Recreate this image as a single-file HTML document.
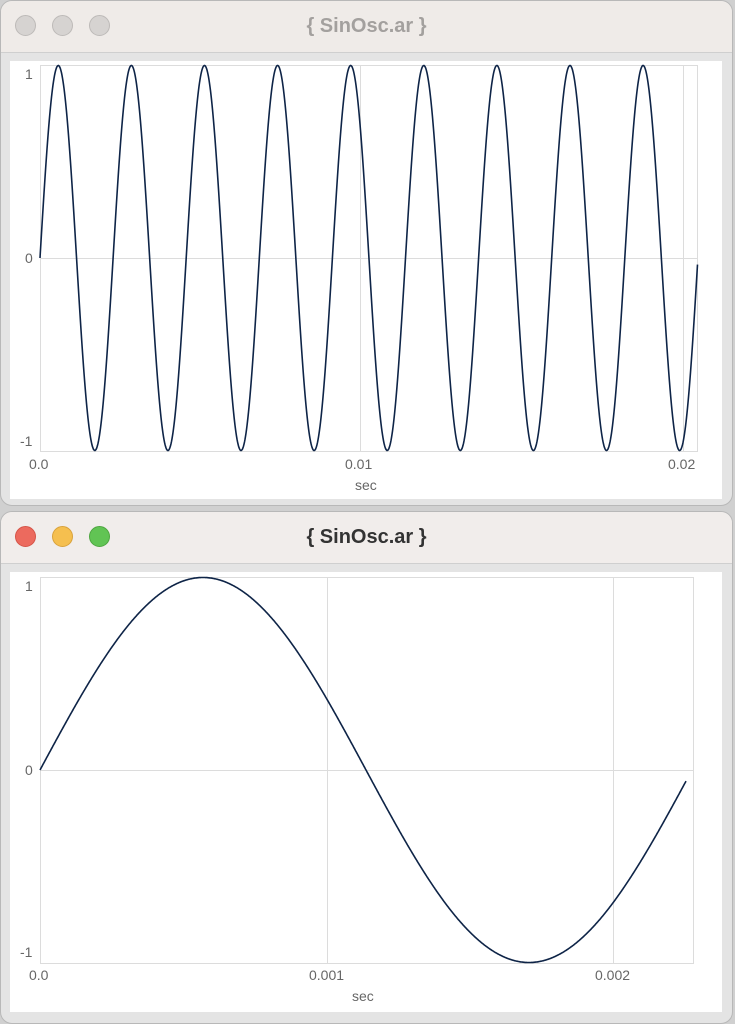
<!DOCTYPE html>
<html><head><meta charset="utf-8"><style>
body{margin:0;width:735px;height:1024px;background:#d0d0d0;position:relative;overflow:hidden;font-family:"Liberation Sans",sans-serif}
.win{position:absolute;left:0;width:733px;background:#e4e4e4;border-radius:12px;border:1px solid #b8b8b8;box-sizing:border-box;overflow:hidden}
.tb{position:absolute;left:0;top:0;right:0;height:51px;background:#efebe8;border-bottom:1px solid #cfcfcf}
.tt{position:absolute;left:0;right:0;top:14px;text-align:center;font-weight:bold;font-size:20px}
.dot{position:absolute;top:14px;width:21px;height:21px;border-radius:50%;box-sizing:border-box}
.panel{position:absolute;left:9px;right:10px;background:#fff}
svg{position:absolute;left:0;top:0}
</style></head><body>
<div class="win" style="top:0;height:506px">
 <div class="tb"><div class="dot" style="left:14px;background:#d6d3d1;border:1px solid #bdbab8"></div><div class="dot" style="left:51px;background:#d6d3d1;border:1px solid #bdbab8"></div><div class="dot" style="left:88px;background:#d6d3d1;border:1px solid #bdbab8"></div><div class="tt" style="color:#a3a09e">{ SinOsc.ar }</div></div>
 <div class="panel" style="top:60px;height:438px"></div>
</div>
<div class="win" style="top:511px;height:513px">
 <div class="tb" style="background:#f1edeb"><div class="dot" style="left:14px;background:#ec6a5e;border:1px solid #d55448"></div><div class="dot" style="left:51px;background:#f5bf4f;border:1px solid #d9a23b"></div><div class="dot" style="left:88px;background:#61c454;border:1px solid #4ea640"></div><div class="tt" style="color:#333">{ SinOsc.ar }</div></div>
 <div class="panel" style="top:60px;height:440px"></div>
</div>
<svg width="735" height="1024" font-family="Liberation Sans, sans-serif" font-size="14" fill="#666">
 <g stroke="#dcdcdc" fill="none" stroke-width="1">
  <rect x="40.5" y="65.5" width="657" height="386"/>
  <line x1="40" y1="258.5" x2="697" y2="258.5"/><line x1="360.5" y1="66" x2="360.5" y2="451"/><line x1="683.5" y1="66" x2="683.5" y2="451"/>
  <rect x="40.5" y="577.5" width="653" height="386"/>
  <line x1="40" y1="770.5" x2="693" y2="770.5"/><line x1="327.5" y1="578" x2="327.5" y2="963"/><line x1="613.5" y1="578" x2="613.5" y2="963"/>
 </g>
 <text x="25" y="79">1</text><text x="25" y="263">0</text><text x="20" y="446">-1</text>
 <text x="29" y="469">0.0</text><text x="345" y="469">0.01</text><text x="668" y="469">0.02</text>
 <text x="355" y="490">sec</text>
 <text x="25" y="591">1</text><text x="25" y="775">0</text><text x="20" y="957">-1</text>
 <text x="29" y="980">0.0</text><text x="309" y="980">0.001</text><text x="595" y="980">0.002</text>
 <text x="352" y="1001">sec</text>
 <path id="p1" fill="none" stroke="#0e2447" stroke-width="1.6"/>
 <path id="p2" fill="none" stroke="#0e2447" stroke-width="1.6"/>
</svg>
<script>
function mk(id,x0,x1,yc,a,per){var d="";for(var x=x0;x<=x1;x+=0.5){var y=yc-a*Math.sin(2*Math.PI*(x-x0)/per);d+=(x==x0?"M":"L")+x.toFixed(1)+" "+y.toFixed(1)+" ";}document.getElementById(id).setAttribute("d",d);}
mk("p1",40,697.5,258,192.5,73.1);
mk("p2",40,686,770,192.5,652);
</script>
</body></html>
